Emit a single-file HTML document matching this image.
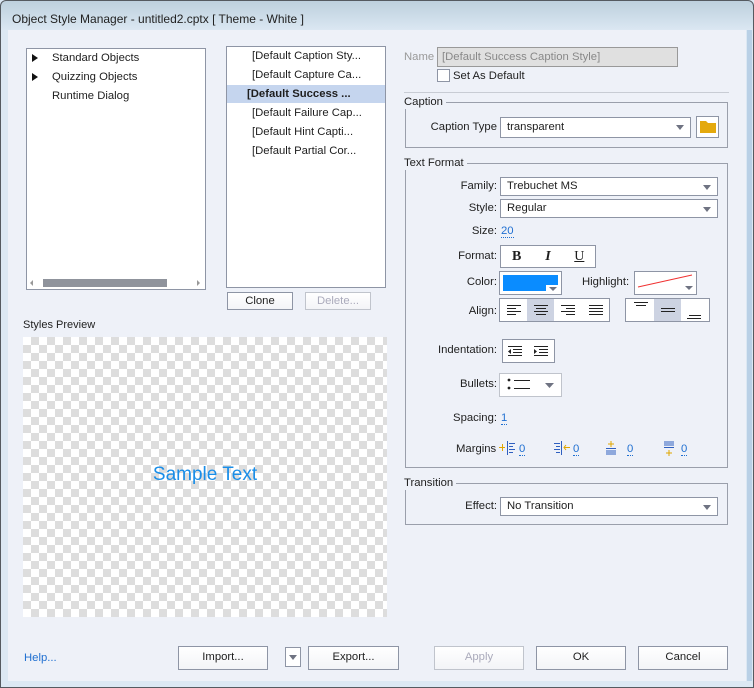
<!DOCTYPE html>
<html><head><meta charset="utf-8"><style>
*{box-sizing:border-box;margin:0;padding:0}
body{width:754px;height:688px;overflow:hidden;background:#dbe7f3;font-family:"Liberation Sans",sans-serif;font-size:11.3px;color:#1e1e1e;position:relative}
.a{position:absolute}
#frame{left:0;top:0;width:754px;height:688px;border:1px solid #555a60;border-radius:6px 6px 0 0;background:linear-gradient(#bdd0dd 0,#dce8f3 30px,#dce8f3 100%)}
#client{left:8px;top:30px;width:738px;height:651px;background:#eef1f8}
.box{background:#fff;border:1px solid #8e95a5}
.t{position:absolute;white-space:nowrap;line-height:14px}
.r{text-align:right}
.btn{position:absolute;border:1px solid #8e95a5;background:linear-gradient(#fff,#f3f4f7);text-align:center;line-height:21px}
.dis{color:#aab;border-color:#c0c4cc}
.sel{position:absolute;background:#fff;border:1px solid #8e95a5;padding-left:6px;line-height:17px}
.sel::after{content:"";position:absolute;right:6px;top:7px;border-left:4px solid transparent;border-right:4px solid transparent;border-top:5px solid #6f7382}
.grp{position:absolute;border:1px solid #9a9fab}
.lg{position:absolute;background:#eef1f8;padding-right:3px;line-height:14px}
.tb{position:absolute;border:1px solid #8e95a5;background:#fff;display:flex}
.tb div{flex:1;height:100%;display:flex;align-items:center;justify-content:center}
.blue{color:#1f6fd1;border-bottom:1px dotted #1f6fd1;line-height:12px}
.chk{background-color:#fff;background-image:linear-gradient(45deg,#ddd 25%,transparent 25%,transparent 75%,#ddd 75%),linear-gradient(45deg,#ddd 25%,transparent 25%,transparent 75%,#ddd 75%);background-size:16px 16px;background-position:0 0,8px 8px}
</style></head><body>
<div id="frame" class="a"></div>
<div class="a" style="left:747px;top:30px;width:5px;height:651px;background:#b9d0e6"></div>
<div class="t" style="left:12px;top:12px;font-size:12px;color:#222">Object Style Manager - untitled2.cptx [ Theme - White ]</div>
<div id="client" class="a"></div>

<div class="a box" style="left:26px;top:48px;width:180px;height:242px"></div>
<div class="a" style="left:32px;top:54px;border-top:4px solid transparent;border-bottom:4px solid transparent;border-left:6px solid #111"></div>
<div class="a" style="left:32px;top:73px;border-top:4px solid transparent;border-bottom:4px solid transparent;border-left:6px solid #111"></div>
<div class="t" style="left:52px;top:51px">Standard Objects</div>
<div class="t" style="left:52px;top:70px">Quizzing Objects</div>
<div class="t" style="left:52px;top:89px">Runtime Dialog</div>
<div class="a" style="left:30px;top:280px;border-top:3px solid transparent;border-bottom:3px solid transparent;border-right:3px solid #999"></div>
<div class="a" style="left:197px;top:280px;border-top:3px solid transparent;border-bottom:3px solid transparent;border-left:3px solid #999"></div>
<div class="a" style="left:43px;top:279px;width:124px;height:8px;background:#8f939c"></div>

<div class="a box" style="left:226px;top:46px;width:160px;height:242px"></div>
<div class="a" style="left:227px;top:85px;width:158px;height:18px;background:#c5d5ee"></div>
<div class="t" style="left:252px;top:49px">[Default Caption Sty...</div>
<div class="t" style="left:252px;top:68px">[Default Capture Ca...</div>
<div class="t" style="left:247px;top:87px;font-weight:bold">[Default Success ...</div>
<div class="t" style="left:252px;top:106px">[Default Failure Cap...</div>
<div class="t" style="left:252px;top:125px">[Default Hint Capti...</div>
<div class="t" style="left:252px;top:144px">[Default Partial Cor...</div>
<div class="btn" style="left:227px;top:292px;width:66px;height:18px;line-height:16px">Clone</div>
<div class="btn dis" style="left:305px;top:292px;width:66px;height:18px;line-height:16px">Delete...</div>

<div class="t" style="left:23px;top:318px;font-size:11px">Styles Preview</div>
<div class="a chk" style="left:23px;top:337px;width:364px;height:280px"></div>
<div class="t" style="left:23px;top:464px;width:364px;text-align:center;font-size:19px;line-height:22px;color:#1a8ee8">Sample Text</div>

<div class="t" style="left:404px;top:50px;color:#999">Name</div>
<div class="a" style="left:437px;top:47px;width:241px;height:20px;background:#e0e0e0;border:1px solid #999"></div>
<div class="t" style="left:442px;top:50px;color:#888">[Default Success Caption Style]</div>
<div class="a" style="left:437px;top:69px;width:13px;height:13px;border:1px solid #8e95a5;background:#fff"></div>
<div class="t" style="left:453px;top:69px">Set As Default</div>
<div class="a" style="left:404px;top:92px;width:325px;height:1px;background:#c8ccd4"></div>

<div class="grp" style="left:405px;top:102px;width:323px;height:46px"></div>
<div class="lg" style="left:404px;top:95px">Caption</div>
<div class="t r" style="left:400px;top:120px;width:97px">Caption Type</div>
<div class="sel" style="left:500px;top:117px;width:191px;height:21px;line-height:19px">transparent</div>
<div class="a" style="left:696px;top:116px;width:23px;height:22px;border:1px solid #8e95a5;background:#fff"></div>
<svg class="a" style="left:700px;top:120px" width="16" height="14"><path d="M0 1h6l2 2h8v10H0z" fill="#e4a90d"/></svg>

<div class="grp" style="left:405px;top:163px;width:323px;height:305px"></div>
<div class="lg" style="left:404px;top:156px">Text Format</div>
<div class="t r" style="left:400px;top:179px;width:97px">Family:</div>
<div class="sel" style="left:500px;top:177px;width:218px;height:19px">Trebuchet MS</div>
<div class="t r" style="left:400px;top:201px;width:97px">Style:</div>
<div class="sel" style="left:500px;top:199px;width:218px;height:19px">Regular</div>
<div class="t r" style="left:400px;top:224px;width:97px">Size:</div>
<div class="t blue" style="left:501px;top:225px">20</div>
<div class="t r" style="left:400px;top:249px;width:97px">Format:</div>
<div class="tb" style="left:500px;top:245px;width:96px;height:23px;font-family:'Liberation Serif',serif;font-size:14px">
<div style="font-weight:bold">B</div><div style="font-style:italic;font-weight:bold">I</div><div style="text-decoration:underline">U</div></div>
<div class="t r" style="left:400px;top:275px;width:97px">Color:</div>
<div class="a" style="left:499px;top:271px;width:63px;height:24px;border:1px solid #8e95a5;background:#fff"></div>
<div class="a" style="left:503px;top:275px;width:55px;height:16px;background:#0a8cff"></div>
<div class="a" style="left:546px;top:285px;width:14px;height:9px;background:#fff"></div>
<div class="a" style="left:549px;top:287px;border-left:4px solid transparent;border-right:4px solid transparent;border-top:4px solid #6f7382"></div>
<div class="t" style="left:582px;top:275px">Highlight:</div>
<div class="a" style="left:634px;top:271px;width:63px;height:24px;border:1px solid #8e95a5;background:#fff"></div>
<svg class="a" style="left:634px;top:271px" width="63" height="24"><line x1="4" y1="16" x2="58" y2="4" stroke="#f03030" stroke-width="1"/><path d="M51 15h8l-4 4z" fill="#6f7382"/></svg>
<div class="t r" style="left:400px;top:304px;width:97px">Align:</div>
<svg class="a" style="left:499px;top:298px" width="111" height="24">
<rect x="0.5" y="0.5" width="110" height="23" fill="#fff" stroke="#8e95a5"/><rect x="28" y="1" width="27" height="22" fill="#cdd3e2"/>
<g stroke="#222"><path d="M8 7.5h14M8 10.5h9M8 13.5h14M8 16.5h9"/><path d="M35 7.5h14M37 10.5h10M35 13.5h14M37 16.5h10"/><path d="M62 7.5h14M67 10.5h9M62 13.5h14M67 16.5h9"/><path d="M90 7.5h14M90 10.5h14M90 13.5h14M90 16.5h14"/></g></svg>
<svg class="a" style="left:625px;top:298px" width="85" height="24">
<rect x="0.5" y="0.5" width="84" height="23" fill="#fff" stroke="#8e95a5"/><rect x="29" y="1" width="27" height="22" fill="#cdd3e2"/>
<g stroke="#222"><path d="M9 4.5h14M11 7.5h10"/><path d="M36 10.5h14M36 13.5h14"/><path d="M64 17.5h12M62 20.5h14"/></g></svg>
<div class="t r" style="left:400px;top:343px;width:97px">Indentation:</div>
<svg class="a" style="left:502px;top:339px" width="53" height="24">
<rect x="0.5" y="0.5" width="52" height="23" fill="#fff" stroke="#8e95a5"/>
<g stroke="#222"><path d="M6 7.5h14M11 10.5h9M11 13.5h9M6 16.5h14M32 7.5h14M37 10.5h9M37 13.5h9M32 16.5h14"/></g>
<path d="M9 10v5l-3-2.5z M32 10v5l3-2.5z" fill="#222"/></svg>
<div class="t r" style="left:400px;top:377px;width:97px">Bullets:</div>
<svg class="a" style="left:499px;top:373px" width="63" height="24">
<rect x="0.5" y="0.5" width="62" height="23" fill="#fff" stroke="#c0c4cc"/>
<circle cx="10" cy="7" r="1.4" fill="#222"/><circle cx="10" cy="15" r="1.4" fill="#222"/><path d="M15 7.5h16M15 15.5h16" stroke="#222"/><path d="M46 10h9l-4.5 5z" fill="#6f7382"/></svg>
<div class="t r" style="left:400px;top:411px;width:97px">Spacing:</div>
<div class="t blue" style="left:501px;top:412px">1</div>
<div class="t" style="left:456px;top:442px">Margins</div>
<svg class="a" style="left:498px;top:440px" width="230" height="16">
<g stroke="#e0a600" fill="none"><path d="M1 7.5h6M4.5 4v7"/><path d="M66 7.5h6M68 5l-2 2.5 2 2.5"/><path d="M113 1v6M110 4h6"/><path d="M171 10v6M168 13h6"/></g>
<g stroke="#2e5fc0" fill="none"><path d="M9.5 1v14M11 3.5h6M11 6.5h4M11 9.5h6M11 12.5h4"/><path d="M63.5 1v14M56 3.5h6M58 6.5h4M56 9.5h6M58 12.5h4"/><path d="M108 8.5h10M109 10v5M111 10v5M113 10v5M115 10v5M117 10v5"/><path d="M166 7.5h10M167 1v5M169 1v5M171 1v5M173 1v5M175 1v5"/></g></svg>
<div class="t blue" style="left:519px;top:443px">0</div>
<div class="t blue" style="left:573px;top:443px">0</div>
<div class="t blue" style="left:627px;top:443px">0</div>
<div class="t blue" style="left:681px;top:443px">0</div>

<div class="grp" style="left:405px;top:483px;width:323px;height:42px"></div>
<div class="lg" style="left:404px;top:476px">Transition</div>
<div class="t r" style="left:400px;top:499px;width:97px">Effect:</div>
<div class="sel" style="left:500px;top:497px;width:218px;height:19px">No Transition</div>

<div class="t" style="left:24px;top:651px;color:#1f6fd1">Help...</div>
<div class="btn" style="left:178px;top:646px;width:90px;height:24px">Import...</div>
<div class="a" style="left:285px;top:647px;width:16px;height:20px;border:1px solid #8e95a5;background:#fff"></div>
<div class="a" style="left:289px;top:655px;border-left:4px solid transparent;border-right:4px solid transparent;border-top:5px solid #6f7382"></div>
<div class="btn" style="left:308px;top:646px;width:91px;height:24px">Export...</div>
<div class="btn dis" style="left:434px;top:646px;width:90px;height:24px">Apply</div>
<div class="btn" style="left:536px;top:646px;width:90px;height:24px">OK</div>
<div class="btn" style="left:638px;top:646px;width:90px;height:24px">Cancel</div>
</body></html>
